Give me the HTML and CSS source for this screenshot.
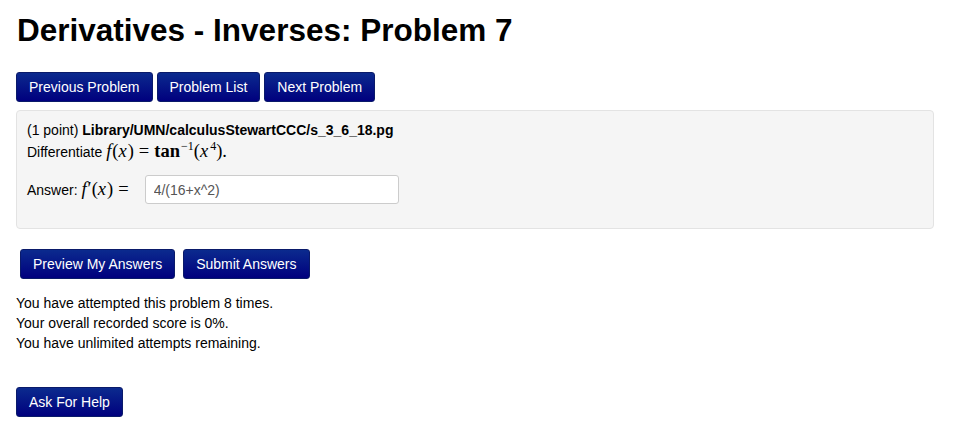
FILE: index.html
```html
<!DOCTYPE html>
<html lang="en">
<head>
    <meta charset="UTF-8">
    <title>Derivatives - Inverses: Problem 7</title>
    <link rel="stylesheet" href="styles.css">
</head>
<body>
    <h1>Derivatives - Inverses: Problem 7</h1>
    <div class="nav">
        <button class="btn">Previous Problem</button>
        <button class="btn">Problem List</button>
        <button class="btn">Next Problem</button>
    </div>
    <div class="problem">
        <div class="line">(1 point) <b>Library/UMN/calculusStewartCCC/s_3_6_18.pg</b></div>
        <div class="line">Differentiate <span class="math"><i>f</i>(<i>x</i>)<span class="eq">=</span><b class="fn">tan</b><sup>−1</sup>(<i>x</i><sup>4</sup>).</span></div>
        <div class="answer">
            <span>Answer: <span class="math"><i>f</i>′(<i>x</i>)<span class="eq">=</span></span></span>
            <input type="text" class="ans" value="4/(16+x^2)">
        </div>
    </div>
    <div class="submit">
        <button class="btn">Preview My Answers</button>
        <button class="btn">Submit Answers</button>
    </div>
    <div class="score">
        You have attempted this problem 8 times.<br>
        Your overall recorded score is 0%.<br>
        You have unlimited attempts remaining.
    </div>
    <button class="btn">Ask For Help</button>
</body>
</html>
```
FILE: styles.css
```css
body { margin: 0; padding: 10px 44px 10px 16px; font-family: "Liberation Sans", Arial, sans-serif; font-size: 14px; color: #000; background: #fff; }
h1 { margin: 0 0 22px 1px; font-size: 31.5px; line-height: 40px; font-weight: bold; }
.btn { font-family: "Liberation Sans", Arial, sans-serif; font-size: 14px; line-height: 17px; padding: 6px 12px 5px; color: #fff; background: linear-gradient(#0b2a8e, #00007e); border: 1px solid #0a1a6a; border-radius: 3px; cursor: pointer; }
.nav { display: flex; gap: 4px; }
.problem { margin-top: 8px; padding: 9px 10px 24px; background: #f5f5f5; border: 1px solid #e3e3e3; border-radius: 4px; }
.line { line-height: 20px; }
.line + .line { margin-top: 1px; }
.math { font-family: "Liberation Serif", "Times New Roman", serif; font-size: 18.5px; }
.math i { padding-right: 1px; }
.math sup { font-size: 12px; line-height: 0; margin-left: 1px; }
.eq { margin: 0 5px; }
.fn { font-weight: bold; font-family: "Liberation Serif", serif; }
.answer { display: flex; align-items: center; gap: 11px; margin-top: 13px; }
.ans { width: 254px; height: 29px; box-sizing: border-box; padding: 4px 8px; font-family: "Liberation Sans", Arial, sans-serif; font-size: 14px; color: #555; background: #fff; border: 1px solid #ccc; border-radius: 3px; }
.submit { display: flex; gap: 8px; margin: 20px 0 0 4px; }
.score { margin: 14px 0 34px; line-height: 20px; }
```
